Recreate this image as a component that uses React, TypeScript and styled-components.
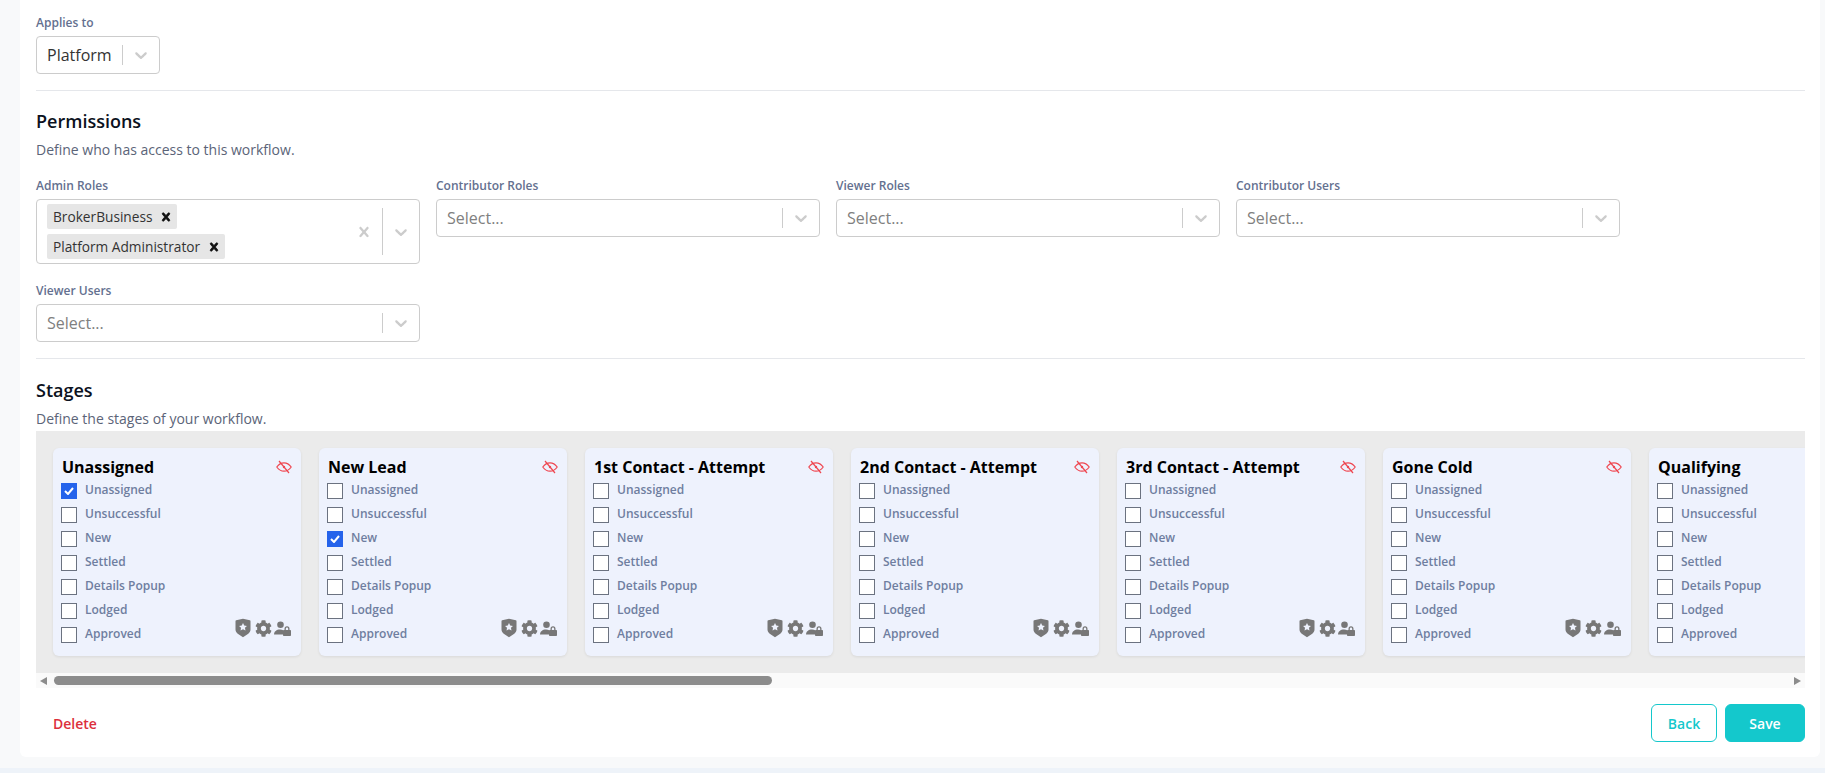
import React from 'react';
import styled, { createGlobalStyle } from 'styled-components';
import { FaCog } from 'react-icons/fa';
import { RiShieldStarFill } from 'react-icons/ri';

const GlobalStyle = createGlobalStyle`
  html, body {
    margin: 0;
    padding: 0;
    height: 100%;
    overflow: hidden;
    font-family: "Open Sans", "Liberation Sans", sans-serif;
  }
  * { box-sizing: border-box; }
`;

const Page = styled.div`
  height: 773px;
  background: #eef3f9;
`;

const Backdrop = styled.div`
  height: 768px;
  padding: 0 5px 11px 20px;
  background: #f8f9fa;
`;

const Card = styled.div`
  height: 757px;
  padding: 14px 15px 0 16px;
  background: #fff;
  border-radius: 0 0 6px 6px;
`;

const Label = styled.div`
  height: 18px;
  margin-bottom: 4px;
  font-size: 12px;
  line-height: 18px;
  font-weight: 600;
  color: #64708f;
`;

const Divider = styled.hr`
  margin: 0;
  border: 0;
  border-top: 1px solid #e5e7eb;
`;

const Heading = styled.h2<{ $offset: number }>`
  margin: ${(p) => p.$offset}px 0 0;
  font-size: 18px;
  line-height: 24px;
  font-weight: 600;
  color: #0b1120;
`;

const Description = styled.p`
  margin: 7px 0 0;
  font-size: 14px;
  line-height: 20px;
  color: #5b6478;
`;

const AppliesField = styled.div`
  width: 124px;
  margin-bottom: 16px;
`;

const Fields = styled.div`
  display: flex;
  flex-wrap: wrap;
  gap: 18px 16px;
  margin-top: 17px;
  margin-bottom: 16px;
`;

const Field = styled.div`
  width: 384px;
`;

const SelectBox = styled.div`
  display: flex;
  align-items: center;
  min-height: 38px;
  background: #fff;
  border: 1px solid #ccc;
  border-radius: 4px;
`;

const SelectValue = styled.div<{ $placeholder?: boolean }>`
  flex: 1;
  min-width: 0;
  padding-left: 10px;
  font-size: 16px;
  color: ${(p) => (p.$placeholder ? '#808080' : '#333')};
  white-space: nowrap;
`;

const TagList = styled.div`
  flex: 1;
  display: flex;
  flex-direction: column;
  align-items: flex-start;
  gap: 5px;
  padding: 4px 0 4px 10px;
`;

const Tag = styled.div`
  display: flex;
  align-items: center;
  height: 25px;
  padding: 0 3px 0 6px;
  gap: 6px;
  font-size: 13.7px;
  color: #333;
  background: #e6e6e6;
  border-radius: 2px;
`;

const IndicatorSeparator = styled.span`
  align-self: stretch;
  width: 1px;
  margin: 8px 0;
  background: #ccc;
`;

const IndicatorIcon = styled.svg`
  flex: none;
  width: 20px;
  height: 20px;
  margin: 0 8px;
  fill: #ccc;
`;

const TagRemove = styled.svg`
  flex: none;
  width: 16px;
  height: 16px;
  fill: #111;
  stroke: #111;
  stroke-width: 1;
`;

const Board = styled.div`
  display: flex;
  gap: 18px;
  margin-top: 2px;
  padding: 17px 0 17px 17px;
  background: #ebebeb;
  overflow: hidden;
`;

const StageCard = styled.div`
  position: relative;
  flex: none;
  width: 248px;
  height: 208px;
  padding: 6px 8px 0 8px;
  background: #eef2fd;
  border-radius: 6px;
  box-shadow: 0 1px 3px rgba(0, 0, 0, 0.08);
`;

const StageHeader = styled.div`
  display: flex;
  align-items: center;
  justify-content: space-between;
  height: 26px;
  padding-left: 1px;
  padding-right: 1px;
`;

const StageTitle = styled.div`
  font-size: 16px;
  font-weight: 700;
  color: #000;
  white-space: nowrap;
`;

const StatusList = styled.div`
  margin-top: 3px;
`;

const StatusRow = styled.label`
  display: flex;
  align-items: flex-start;
  height: 24px;
  gap: 8px;
  font-size: 12px;
  line-height: 14px;
  font-weight: 600;
  color: #6f7ea0;
`;

const Check = styled.span<{ $on?: boolean }>`
  flex: none;
  display: flex;
  align-items: center;
  justify-content: center;
  width: 16px;
  height: 16px;
  background: ${(p) => (p.$on ? '#2563eb' : '#fff')};
  border: 1px solid ${(p) => (p.$on ? '#2563eb' : '#6b7280')};
`;

const StageTools = styled.div`
  position: absolute;
  right: 10px;
  bottom: 18px;
  display: flex;
  align-items: center;
  gap: 2px;
  color: #777;
`;

const ScrollTrack = styled.div`
  display: flex;
  align-items: center;
  height: 15px;
  padding: 0 4px;
  background: #fafafa;
`;

const ScrollThumb = styled.div`
  width: 718px;
  height: 9px;
  margin-left: 7px;
  background: #8c8c8c;
  border-radius: 5px;
`;

const ScrollArrow = styled.span<{ $dir: 'left' | 'right' }>`
  flex: none;
  width: 0;
  height: 0;
  border-top: 4px solid transparent;
  border-bottom: 4px solid transparent;
  ${(p) => (p.$dir === 'left' ? 'border-right: 7px solid #8c8c8c;' : 'border-left: 7px solid #8c8c8c; margin-left: auto;')}
`;

const Footer = styled.div`
  display: flex;
  align-items: center;
  justify-content: space-between;
  margin-top: 16px;
`;

const DeleteButton = styled.button`
  margin-left: 17px;
  padding: 0;
  font-family: inherit;
  font-size: 14px;
  font-weight: 600;
  color: #dc2f3c;
  background: none;
  border: 0;
`;

const FooterActions = styled.div`
  display: flex;
  gap: 8px;
`;

const ActionButton = styled.button<{ $primary?: boolean }>`
  width: ${(p) => (p.$primary ? '80px' : '66px')};
  height: 38px;
  font-family: inherit;
  font-size: 14px;
  font-weight: 600;
  color: ${(p) => (p.$primary ? '#fff' : '#14c8cc')};
  background: ${(p) => (p.$primary ? '#14c8cc' : '#fff')};
  border: 1px solid #14c8cc;
  border-radius: 6px;
`;

const CHEVRON =
  'M4.516 7.548c0.436-0.446 1.043-0.481 1.576 0l3.908 3.747 3.908-3.747c0.533-0.481 1.141-0.446 1.576 0 0.436 0.445 0.408 1.197 0 1.615-0.406 0.418-4.695 4.502-4.695 4.502-0.217 0.223-0.502 0.335-0.787 0.335s-0.57-0.112-0.789-0.335c0 0-4.287-4.084-4.695-4.502s-0.436-1.17 0-1.615z';
const CROSS =
  'M14.348 14.849c-0.469 0.469-1.229 0.469-1.697 0l-2.651-3.03-2.651 3.029c-0.469 0.469-1.229 0.469-1.697 0-0.469-0.469-0.469-1.229 0-1.697l2.758-3.15-2.759-3.152c-0.469-0.469-0.469-1.228 0-1.697s1.228-0.469 1.697 0l2.652 3.031 2.651-3.031c0.469-0.469 1.228-0.469 1.697 0s0.469 1.229 0 1.697l-2.758 3.152 2.758 3.15c0.469 0.469 0.469 1.229 0 1.698z';

const statuses = ['Unassigned', 'Unsuccessful', 'New', 'Settled', 'Details Popup', 'Lodged', 'Approved'];

const stages = [
  { title: 'Unassigned', checked: 'Unassigned' },
  { title: 'New Lead', checked: 'New' },
  { title: '1st Contact - Attempt' },
  { title: '2nd Contact - Attempt' },
  { title: '3rd Contact - Attempt' },
  { title: 'Gone Cold' },
  { title: 'Qualifying' },
];

const Chevron = () => (
  <IndicatorIcon viewBox="0 0 20 20">
    <path d={CHEVRON} />
  </IndicatorIcon>
);

const HiddenEye = () => (
  <svg width="16" height="14" viewBox="0 0 16 14" fill="none" stroke="#ef4650" strokeWidth="1.2">
    <path d="M0.8 7C2.8 4.2 5.2 2.8 8 2.8s5.2 1.4 7.2 4.2c-2 2.8-4.4 4.2-7.2 4.2S2.800 9.800 0.800 7z" />
    <circle cx="8" cy="7" r="1.2" fill="#ef4650" stroke="none" />
    <path d="M3 1l10 12" />
  </svg>
);

const UserLock = () => (
  <svg width="17" height="15" viewBox="0 0 17 15" fill="#777">
    <circle cx="6.500" cy="3.800" r="3.300" />
    <path d="M0 13.500c0-3 2.500-5 6-5 1.200 0 2.300 0.200 3.200 0.700v4.300z" />
    <path d="M10.500 9V7.800a2.500 2.500 0 0 1 5 0V9h0.700a0.800 0.800 0 0 1 0.800 0.800v4.400a0.800 0.800 0 0 1-0.800 0.800H9.800a0.800 0.800 0 0 1-0.800-0.800V9.800A0.800 0.800 0 0 1 9.800 9zm1.300 0h2.400V7.800a1.200 1.200 0 0 0-2.400 0z" />
  </svg>
);

const PlaceholderSelect = ({ label }: { label: string }) => (
  <Field>
    <Label>{label}</Label>
    <SelectBox>
      <SelectValue $placeholder>Select...</SelectValue>
      <IndicatorSeparator />
      <Chevron />
    </SelectBox>
  </Field>
);

const StageColumn = ({ title, checked }: { title: string; checked?: string }) => (
  <StageCard>
    <StageHeader>
      <StageTitle>{title}</StageTitle>
      <HiddenEye />
    </StageHeader>
    <StatusList>
      {statuses.map((s) => (
        <StatusRow key={s}>
          <Check $on={s === checked}>
            {s === checked && (
              <svg width="10" height="8" viewBox="0 0 10 8" fill="none" stroke="#fff" strokeWidth="2">
                <path d="M1 4l3 3 5-6" />
              </svg>
            )}
          </Check>
          {s}
        </StatusRow>
      ))}
    </StatusList>
    <StageTools>
      <RiShieldStarFill size={20} />
      <FaCog size={17} />
      <UserLock />
    </StageTools>
  </StageCard>
);

const App = () => (
  <Page>
    <GlobalStyle />
    <Backdrop>
      <Card>
        <AppliesField>
          <Label>Applies to</Label>
          <SelectBox>
            <SelectValue>Platform</SelectValue>
            <IndicatorSeparator />
            <Chevron />
          </SelectBox>
        </AppliesField>
        <Divider />

        <Heading $offset={18}>Permissions</Heading>
        <Description>Define who has access to this workflow.</Description>
        <Fields>
          <Field>
            <Label>Admin Roles</Label>
            <SelectBox>
              <TagList>
                <Tag>
                  BrokerBusiness
                  <TagRemove viewBox="0 0 20 20">
                    <path d={CROSS} />
                  </TagRemove>
                </Tag>
                <Tag>
                  Platform Administrator
                  <TagRemove viewBox="0 0 20 20">
                    <path d={CROSS} />
                  </TagRemove>
                </Tag>
              </TagList>
              <IndicatorIcon viewBox="0 0 20 20">
                <path d={CROSS} />
              </IndicatorIcon>
              <IndicatorSeparator />
              <Chevron />
            </SelectBox>
          </Field>
          <PlaceholderSelect label="Contributor Roles" />
          <PlaceholderSelect label="Viewer Roles" />
          <PlaceholderSelect label="Contributor Users" />
          <PlaceholderSelect label="Viewer Users" />
        </Fields>
        <Divider />

        <Heading $offset={19}>Stages</Heading>
        <Description>Define the stages of your workflow.</Description>
        <Board>
          {stages.map((s) => (
            <StageColumn key={s.title} title={s.title} checked={s.checked} />
          ))}
        </Board>
        <ScrollTrack>
          <ScrollArrow $dir="left" />
          <ScrollThumb />
          <ScrollArrow $dir="right" />
        </ScrollTrack>

        <Footer>
          <DeleteButton>Delete</DeleteButton>
          <FooterActions>
            <ActionButton>Back</ActionButton>
            <ActionButton $primary>Save</ActionButton>
          </FooterActions>
        </Footer>
      </Card>
    </Backdrop>
  </Page>
);

export default App;
